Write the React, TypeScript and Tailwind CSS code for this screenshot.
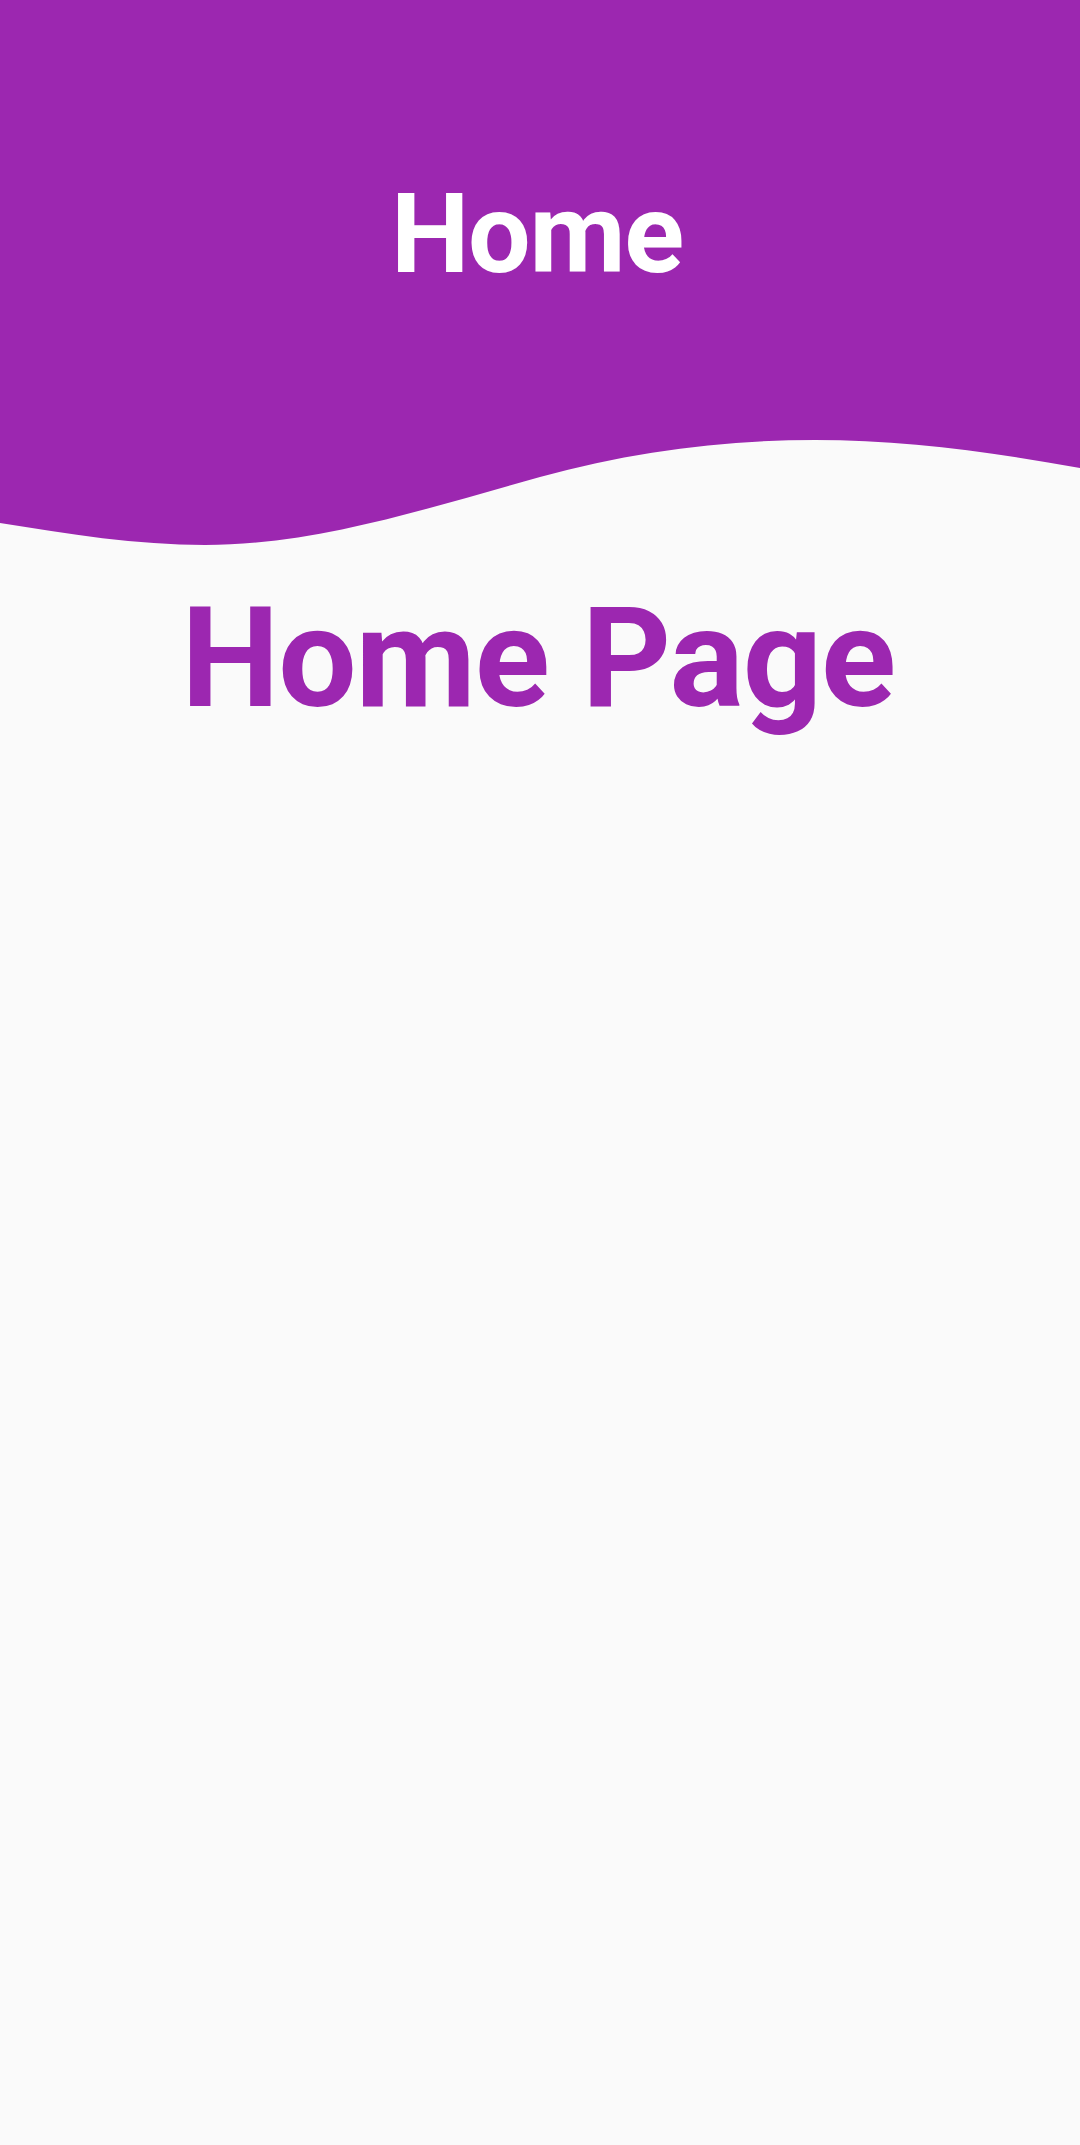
import React from "react";

export default function App() {
  return (
    <div className="relative min-h-[2145px] w-[1080px] bg-[#fafafa]" style={{ fontFamily: "Roboto, 'Liberation Sans', sans-serif" }}>
      <svg
        className="absolute left-0 top-0"
        width="1080"
        height="560"
        viewBox="0 0 1080 560"
        aria-hidden="true"
      >
        <path
          d="M0 0 V523 C68 534 137 545 205 545 C317 545 428 508 540 477 C632 451.5 723 440 815 440 C903 440 992 452 1080 468 V0 Z"
          fill="#9c27b0"
        />
      </svg>
      <div className="relative flex flex-col items-center">
        <h1 className="mt-[179px] -translate-x-[3px] text-[111px] leading-[111px] font-bold tracking-[-1.3px] text-white">Home</h1>
        <h2 className="mt-[299px] -translate-x-[2px] text-[139px] leading-[139px] font-bold tracking-[-1.2px] text-[#9c27b0]">Home Page</h2>
      </div>
    </div>
  );
}
